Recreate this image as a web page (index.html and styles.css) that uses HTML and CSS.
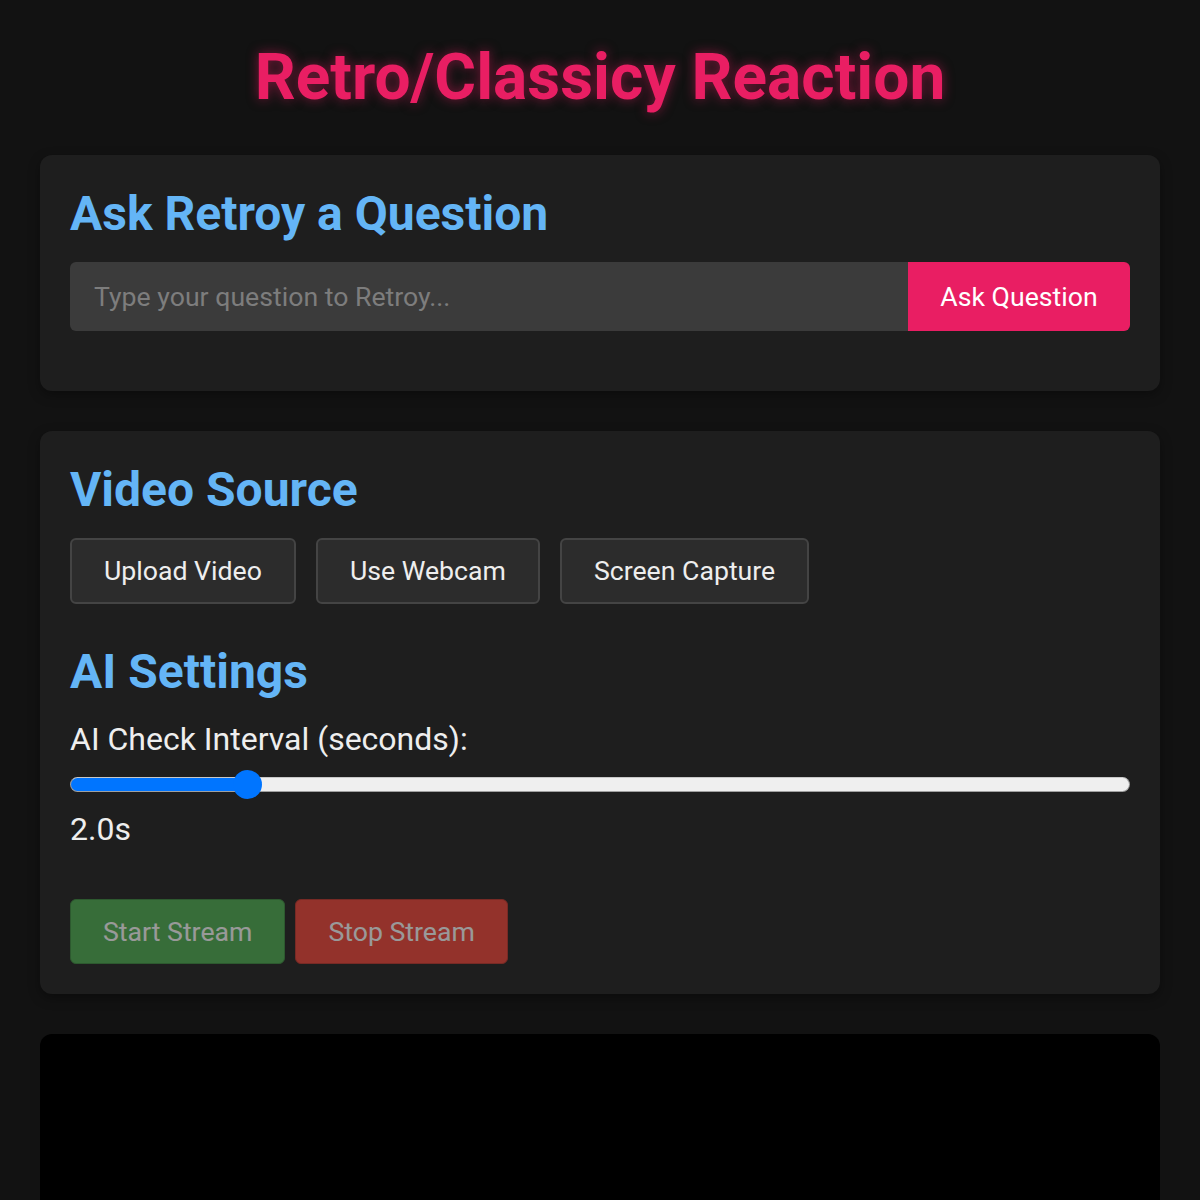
FILE: index.html
```html
<!DOCTYPE html>
<html>
<head>
    <title>Retro/Classicy Reaction</title>
    <link rel="stylesheet" href="styles.css">
</head>
<body>
    <h1 class="title">Retro/Classicy Reaction</h1>

    <section class="card">
        <h2>Ask Retroy a Question</h2>
        <form class="ask-form" id="askForm">
            <input type="text" class="ask-input" id="question" placeholder="Type your question to Retroy...">
            <button type="submit" class="ask-btn">Ask Question</button>
        </form>
    </section>

    <section class="card">
        <h2>Video Source</h2>
        <div class="source-row">
            <button class="btn">Upload Video</button>
            <button class="btn">Use Webcam</button>
            <button class="btn">Screen Capture</button>
        </div>

        <h2>AI Settings</h2>
        <label class="field-label" for="interval">AI Check Interval (seconds):</label>
        <input type="range" class="slider" id="interval" min="0.5" max="10" step="0.5" value="2" style="--fill: 17%">
        <div class="slider-value" id="intervalValue">2.0s</div>

        <div class="stream-row">
            <button class="btn btn-start" disabled>Start Stream</button>
            <button class="btn btn-stop" disabled>Stop Stream</button>
        </div>
    </section>

    <div class="video-box"></div>
</body>
</html>
```
FILE: styles.css
```css
body {
    font-family: Roboto, "Liberation Sans", sans-serif;
    background-color: #121212;
    color: #eeeeee;
    margin: 0;
    padding: 40px 40px 0;
}

.title {
    text-align: center;
    color: #e91e63;
    font-size: 64px;
    font-weight: 700;
    margin: 0 0 40px;
    text-shadow: 0 0 12px rgba(233, 30, 99, 0.5);
}

.card {
    background-color: #1e1e1e;
    border-radius: 12px;
    padding: 30px;
    margin-bottom: 40px;
    box-shadow: 0 4px 12px rgba(0, 0, 0, 0.35);
}

.card h2 {
    color: #64b5f6;
    font-size: 48px;
    font-weight: 700;
    margin: 0 0 20px;
}

.ask-form {
    display: flex;
    margin-bottom: 30px;
}

.ask-input {
    flex: 1;
    height: 69px;
    box-sizing: border-box;
    padding: 0 24px;
    border: none;
    border-radius: 6px 0 0 6px;
    background-color: #3b3b3b;
    color: #eee;
    font-family: inherit;
    font-size: 26.67px;
}

.ask-input::placeholder {
    color: #7d7d7d;
}

.ask-btn {
    width: 222px;
    border: none;
    border-radius: 0 6px 6px 0;
    background-color: #e91e63;
    color: #fff;
    font-family: inherit;
    font-size: 26.67px;
    cursor: pointer;
}

.source-row {
    display: flex;
    gap: 20px;
    margin-bottom: 39px;
}

.btn {
    padding: 15px 32px;
    border: 2px solid #444;
    border-radius: 6px;
    background-color: #2c2c2c;
    color: #eeeeee;
    font-family: inherit;
    font-size: 26.67px;
    cursor: pointer;
}

.field-label {
    display: block;
    font-size: 32px;
    margin-bottom: 19px;
}

.slider {
    -webkit-appearance: none;
    appearance: none;
    display: block;
    width: 100%;
    height: 15px;
    margin: 0;
    border-radius: 8px;
    border: 1px solid #a0a0a0;
    border-top-color: #c8c8c8;
    box-sizing: border-box;
    background: linear-gradient(to right, #0075ff var(--fill), #efefef var(--fill));
}

.slider::-webkit-slider-thumb {
    -webkit-appearance: none;
    width: 29px;
    height: 29px;
    border-radius: 50%;
    background-color: #0075ff;
    border: none;
}

.slider-value {
    font-size: 32px;
    margin-top: 18px;
}

.stream-row {
    display: flex;
    gap: 10px;
    margin-top: 51px;
}

.btn-start,
.btn-stop {
    border-width: 1px;
    padding: 15.5px 32px;
    color: #fff;
    opacity: 0.55;
    cursor: default;
}

.btn-start {
    background-color: #4caf50;
    border-color: #3b8a3e;
}

.btn-stop {
    background-color: #f44336;
    border-color: #c0352b;
}

.video-box {
    background-color: #000;
    border-radius: 12px 12px 0 0;
    height: 300px;
}
```
